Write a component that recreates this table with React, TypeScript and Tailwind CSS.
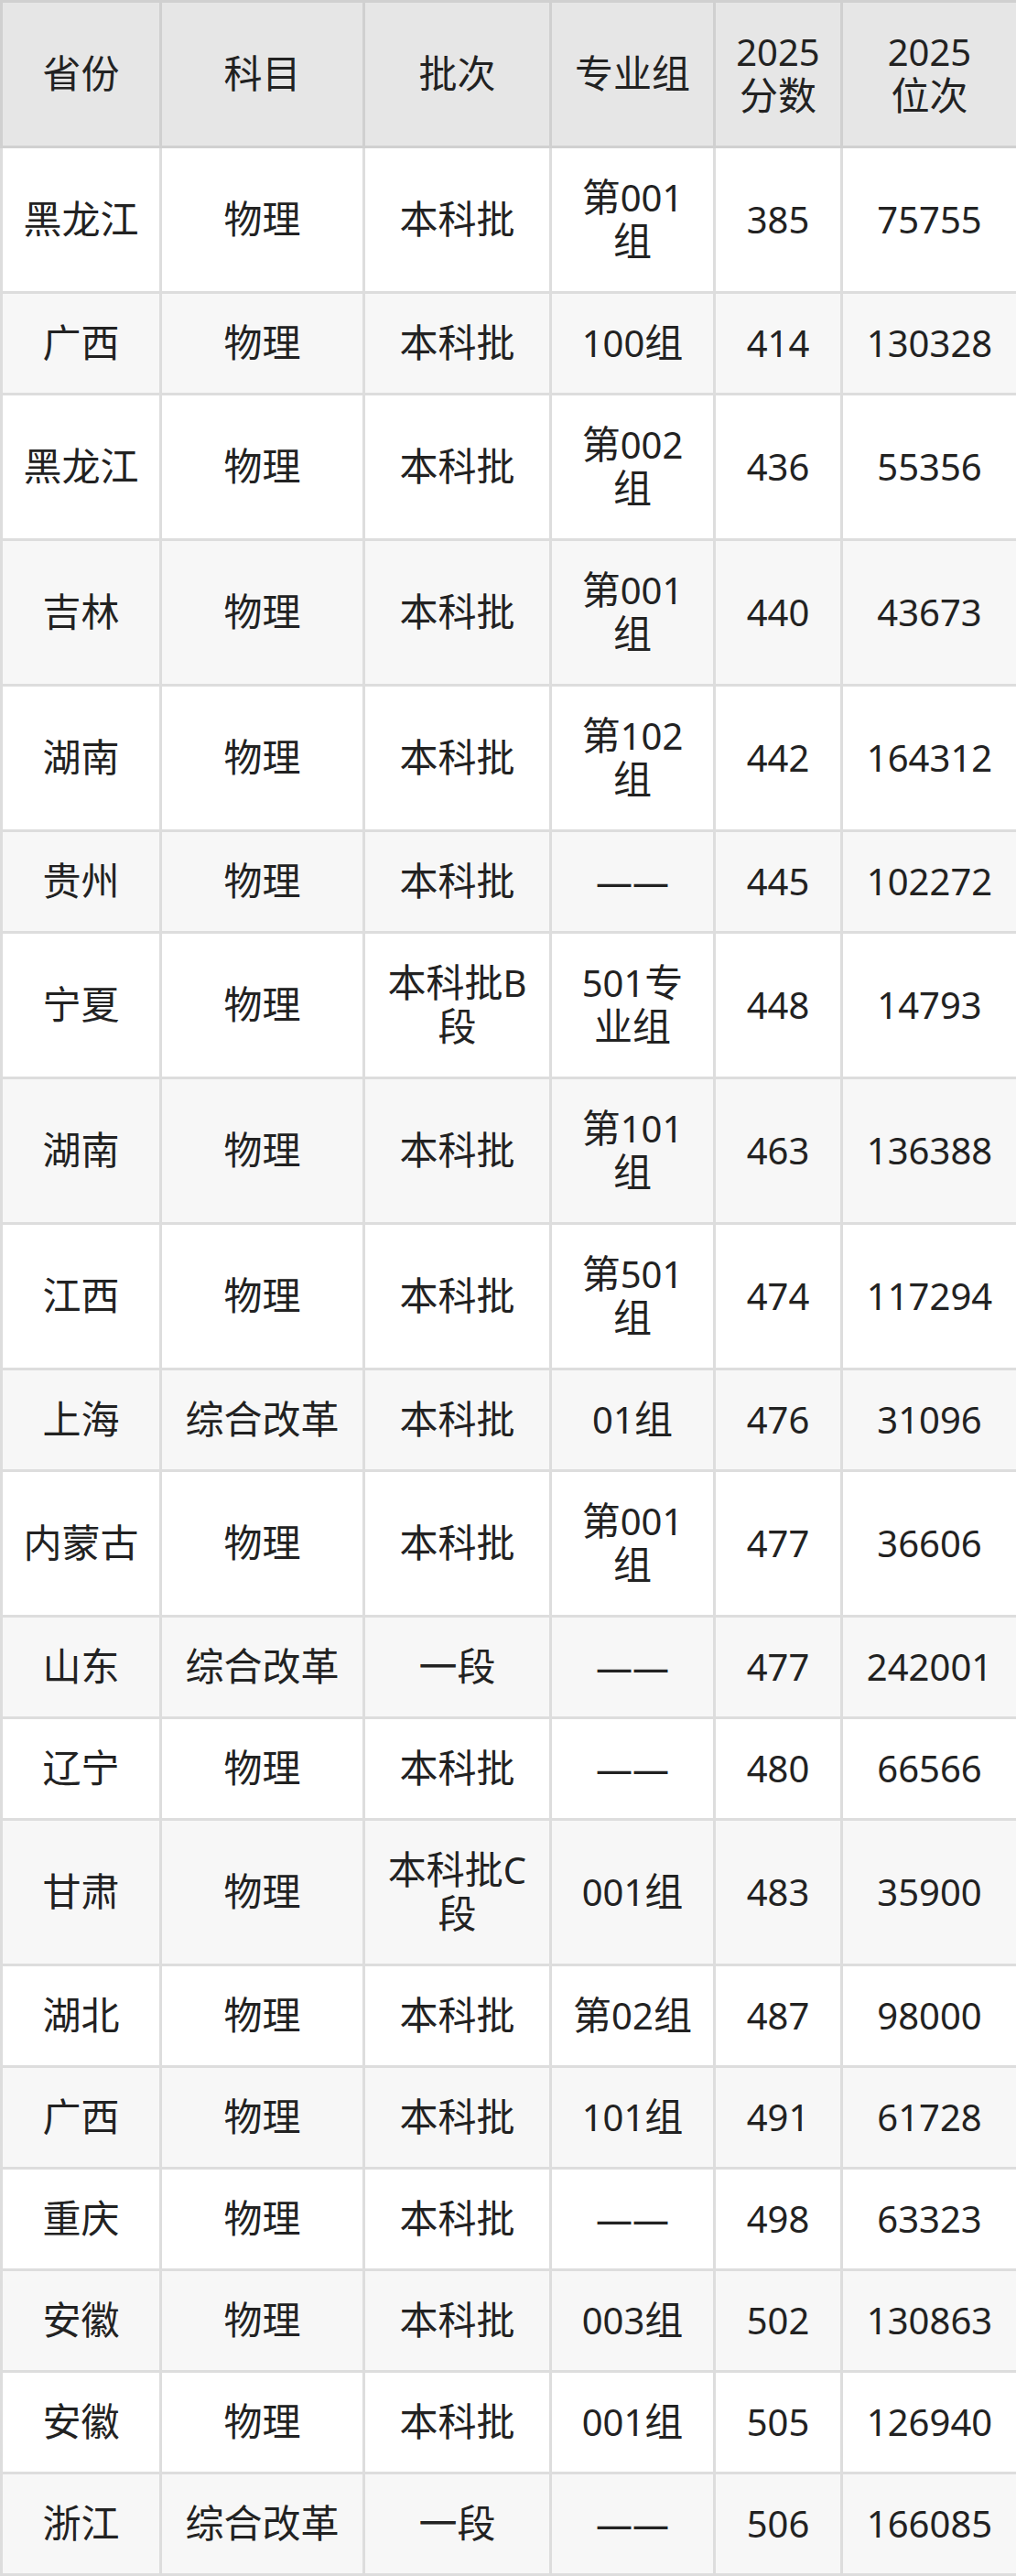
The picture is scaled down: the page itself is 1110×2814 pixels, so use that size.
import React from 'react';

interface Row {
  province: string;
  subject: string;
  batch: string;
  group: string;
  score: string;
  rank: string;
}

const headers = ['省份', '科目', '批次', '专业组', '2025\n分数', '2025\n位次'];

const rows: Row[] = [
  { province: '黑龙江', subject: '物理', batch: '本科批', group: '第001\n组', score: '385', rank: '75755' },
  { province: '广西', subject: '物理', batch: '本科批', group: '100组', score: '414', rank: '130328' },
  { province: '黑龙江', subject: '物理', batch: '本科批', group: '第002\n组', score: '436', rank: '55356' },
  { province: '吉林', subject: '物理', batch: '本科批', group: '第001\n组', score: '440', rank: '43673' },
  { province: '湖南', subject: '物理', batch: '本科批', group: '第102\n组', score: '442', rank: '164312' },
  { province: '贵州', subject: '物理', batch: '本科批', group: '——', score: '445', rank: '102272' },
  { province: '宁夏', subject: '物理', batch: '本科批B\n段', group: '501专\n业组', score: '448', rank: '14793' },
  { province: '湖南', subject: '物理', batch: '本科批', group: '第101\n组', score: '463', rank: '136388' },
  { province: '江西', subject: '物理', batch: '本科批', group: '第501\n组', score: '474', rank: '117294' },
  { province: '上海', subject: '综合改革', batch: '本科批', group: '01组', score: '476', rank: '31096' },
  { province: '内蒙古', subject: '物理', batch: '本科批', group: '第001\n组', score: '477', rank: '36606' },
  { province: '山东', subject: '综合改革', batch: '一段', group: '——', score: '477', rank: '242001' },
  { province: '辽宁', subject: '物理', batch: '本科批', group: '——', score: '480', rank: '66566' },
  { province: '甘肃', subject: '物理', batch: '本科批C\n段', group: '001组', score: '483', rank: '35900' },
  { province: '湖北', subject: '物理', batch: '本科批', group: '第02组', score: '487', rank: '98000' },
  { province: '广西', subject: '物理', batch: '本科批', group: '101组', score: '491', rank: '61728' },
  { province: '重庆', subject: '物理', batch: '本科批', group: '——', score: '498', rank: '63323' },
  { province: '安徽', subject: '物理', batch: '本科批', group: '003组', score: '502', rank: '130863' },
  { province: '安徽', subject: '物理', batch: '本科批', group: '001组', score: '505', rank: '126940' },
  { province: '浙江', subject: '综合改革', batch: '一段', group: '——', score: '506', rank: '166085' },
];

// column widths measured off the screenshot
const widths = ['w-[174px]', 'w-[222px]', 'w-[204px]', 'w-[179px]', 'w-[139px]', 'w-[192px]'];

// Chinese glyphs sit a touch larger than the latin digits in the original
const Mixed: React.FC<{ text: string }> = ({ text }) => (
  <>
    {text.split(/([\u4e00-\u9fff]+)/).map((part, k) =>
      /[\u4e00-\u9fff]/.test(part) ? (
        <span key={k} className="font-['Noto_Sans_CJK_SC',sans-serif] text-[42px] leading-none">
          {part}
        </span>
      ) : (
        part
      )
    )}
  </>
);

const App: React.FC = () => {
  return (
    <div className="w-[1110px] bg-white font-['Noto_Sans','Noto_Sans_CJK_SC',sans-serif] text-[#222222]">
      <table className="w-[1110px] table-fixed border-collapse text-center text-[40px] leading-[48px]">
        <thead>
          <tr className="bg-[#e6e6e6]">
            {headers.map((h, j) => (
              <th
                key={h}
                className={`${widths[j]} border-[3px] border-[#d0d0d0] px-1 py-[30px] font-normal whitespace-pre`}
              >
                <Mixed text={h} />
              </th>
            ))}
          </tr>
        </thead>
        <tbody>
          {rows.map((r, i) => (
            <tr key={i} className={i % 2 === 1 ? 'bg-[#f7f7f7]' : 'bg-white'}>
              {[r.province, r.subject, r.batch, r.group, r.score, r.rank].map((v, j) => (
                <td key={j} className="border-[3px] border-[#dddddd] px-1 py-[30px] whitespace-pre">
                  <Mixed text={v} />
                </td>
              ))}
            </tr>
          ))}
        </tbody>
      </table>
    </div>
  );
};

export default App;
